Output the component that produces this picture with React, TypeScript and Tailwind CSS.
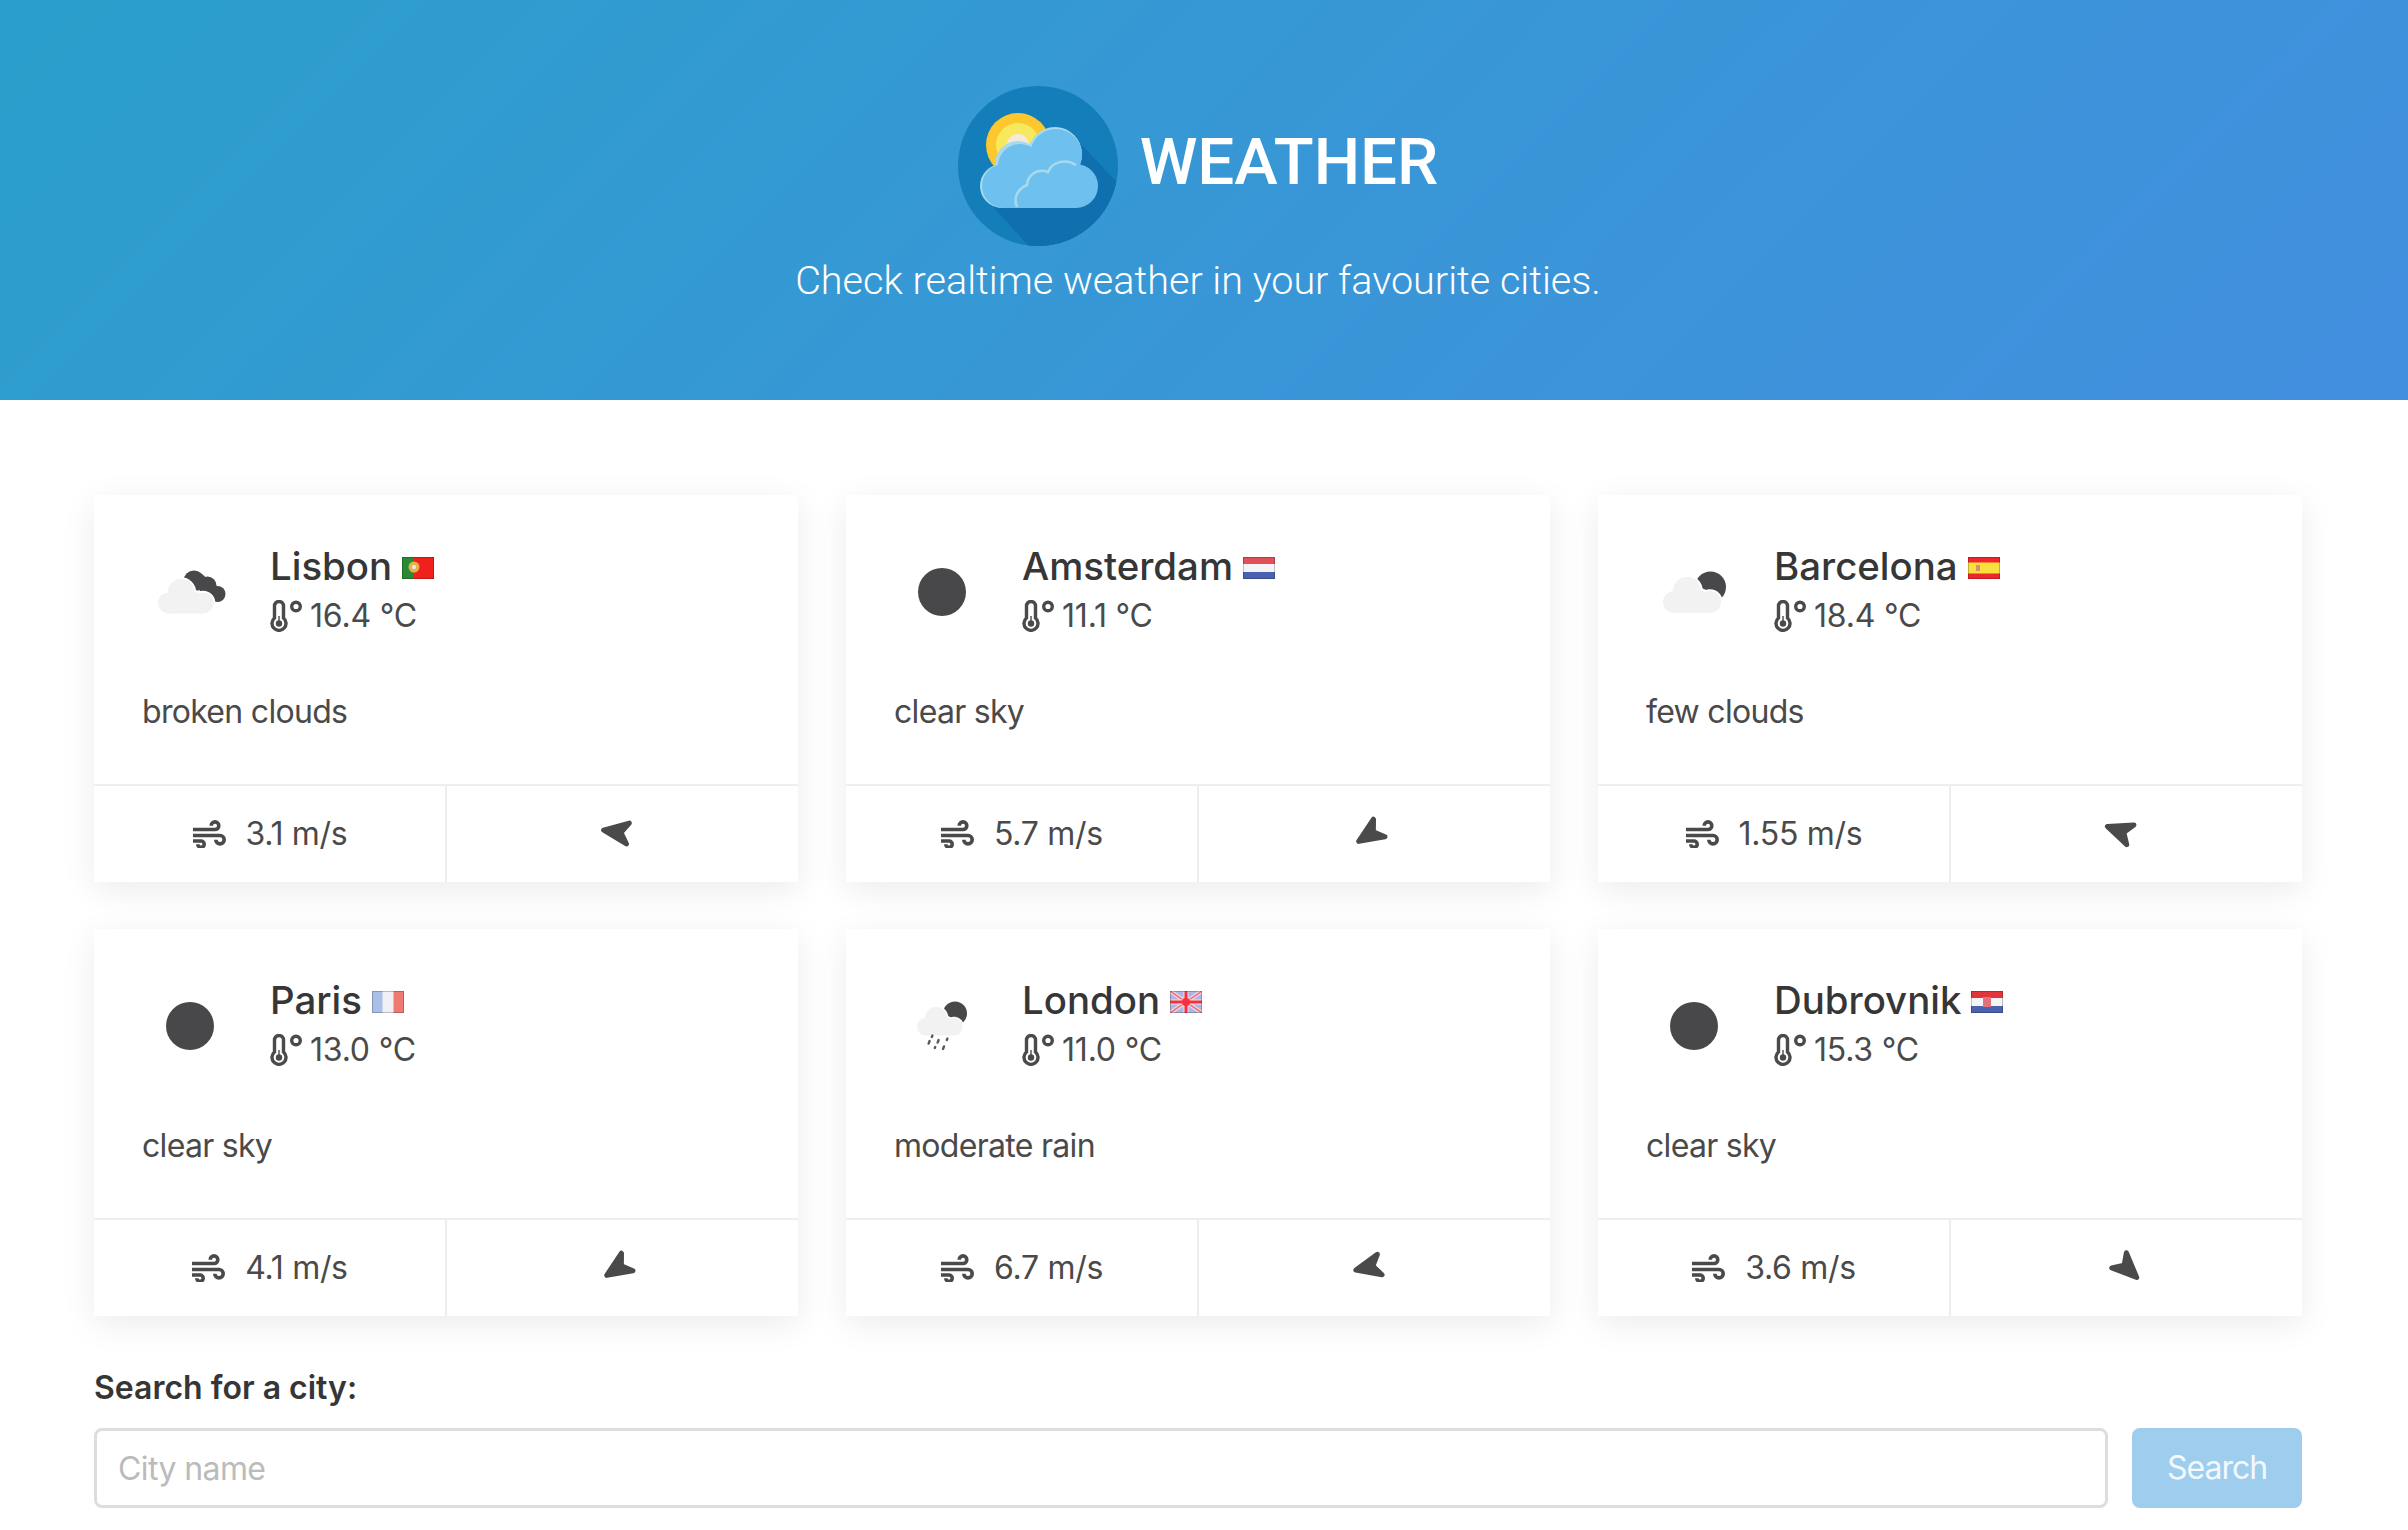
import React from "react";

type Weather = "broken" | "clear" | "few" | "rain";
type Flag = "pt" | "nl" | "es" | "fr" | "gb" | "hr";

const cities: { name: string; flag: Flag; temp: string; desc: string; weather: Weather; wind: string; deg: number; dx: number; dy: number }[] = [
  { name: "Lisbon", flag: "pt", temp: "16.4", desc: "broken clouds", weather: "broken", wind: "3.1", deg: -82, dx: -6, dy: -2 },
  { name: "Amsterdam", flag: "nl", temp: "11.1", desc: "clear sky", weather: "clear", wind: "5.7", deg: -123, dx: -5, dy: 0 },
  { name: "Barcelona", flag: "es", temp: "18.4", desc: "few clouds", weather: "few", wind: "1.55", deg: -70, dx: -7, dy: -3 },
  { name: "Paris", flag: "fr", temp: "13.0", desc: "clear sky", weather: "clear", wind: "4.1", deg: -123, dx: -5, dy: 0 },
  { name: "London", flag: "gb", temp: "11.0", desc: "moderate rain", weather: "rain", wind: "6.7", deg: -103, dx: -6, dy: -1 },
  { name: "Dubrovnik", flag: "hr", temp: "15.3", desc: "clear sky", weather: "clear", wind: "3.6", deg: 134, dx: 0, dy: 0 },
];

const Logo = () => (
  <svg width="160" height="160" viewBox="0 0 160 160" className="shrink-0">
    <defs>
      <clipPath id="logo-circle">
        <circle cx="80" cy="80" r="80" />
      </clipPath>
    </defs>
    <circle cx="80" cy="80" r="80" fill="#147ebb" />
    <polygon points="123,58 168,106 168,168 78,168 30,115" fill="#106fae" clipPath="url(#logo-circle)" />
    <circle cx="60" cy="59" r="32" fill="#fdc72e" />
    <circle cx="60" cy="59" r="22" fill="#f7e95e" />
    <circle cx="60" cy="59" r="11" fill="#f3e9dc" />
    <g fill="#a9d9ec">
      <circle cx="97" cy="68" r="27" />
      <circle cx="60" cy="78" r="23" />
      <circle cx="44" cy="100" r="22" />
    </g>
    <g fill="#6ec1ee">
      <circle cx="98" cy="69" r="26" />
      <circle cx="62" cy="80" r="22" />
      <circle cx="46" cy="100" r="22" />
      <circle cx="118" cy="100" r="22" />
      <rect x="46" y="78" width="72" height="44" />
    </g>
    <path d="M59 121 C55 111 60 103 69 99 C70 88 80 82 90 86 C94 76 108 72 118 79" fill="none" stroke="#a9d9ec" strokeWidth="2.5" />
  </svg>
);

const Cloud = ({ x, y, s = 1, fill }: { x: number; y: number; s?: number; fill: string }) => (
  <g transform={`translate(${x} ${y}) scale(${s})`} fill={fill} stroke={fill === "#fff" ? "#fff" : "none"} strokeWidth={fill === "#fff" ? 3.5 : 0}>
    <circle cx="11" cy="25" r="11" />
    <circle cx="24" cy="14" r="14" />
    <circle cx="37" cy="22" r="9" />
    <circle cx="47" cy="25" r="11" />
    <rect x="11" y="18" width="36" height="18" />
  </g>
);

const WeatherIcon = ({ type }: { type: Weather }) => (
  <svg width="96" height="96" viewBox="0 0 96 96" className="shrink-0">
    {type === "clear" && <circle cx="48" cy="48" r="24" fill="#48484a" />}
    {type === "few" && (
      <>
        <circle cx="64.5" cy="43" r="15.5" fill="#48484a" />
        <Cloud x={17} y={33} fill="#fff" />
        <Cloud x={17} y={33} fill="#f2f2f2" />
      </>
    )}
    {type === "broken" && (
      <>
        <g fill="#48484a">
          <circle cx="52" cy="37" r="10.5" />
          <circle cx="65.5" cy="41.5" r="9" />
          <circle cx="75.5" cy="50" r="8" />
          <path d="M45 36 L60 30 L83 50 L72 58 Z" />
        </g>
        <Cloud x={16} y={35} s={0.96} fill="#fff" />
        <Cloud x={16} y={35} s={0.96} fill="#f2f2f2" />
      </>
    )}
    {type === "rain" && (
      <>
        <circle cx="61" cy="35.5" r="12" fill="#48484a" />
        <Cloud x={23} y={29} s={0.79} fill="#fff" />
        <Cloud x={23} y={29} s={0.79} fill="#f2f2f2" />
        <g stroke="#58585a" strokeWidth="2.4" strokeLinecap="round">
          <path d="M38.4 57.6 L37.8 59" />
          <path d="M35.6 63 L34.6 65.6" />
          <path d="M44.6 62 L43.6 64.6" />
          <path d="M53.4 60.6 L52.8 62" />
          <path d="M41.2 69 L40.8 70" />
          <path d="M50 68.4 L49 71" />
        </g>
      </>
    )}
  </svg>
);

const FlagIcon = ({ code }: { code: Flag }) => (
  <svg width="32" height="22" viewBox="0 0 32 22" className="shrink-0 ml-[10px] mt-[4px] [filter:blur(0.5px)]">
    {code === "pt" && (
      <>
        <rect width="32" height="22" fill="#f0201c" />
        <rect width="12" height="22" fill="#2a8a34" />
        <circle cx="12" cy="10" r="5.5" fill="#e9b04a" />
        <circle cx="12" cy="10" r="2.2" fill="#e8e4e4" />
      </>
    )}
    {code === "nl" && (
      <>
        <rect width="32" height="22" fill="#f4f4f8" />
        <rect width="32" height="7" fill="#e0505a" />
        <rect y="15" width="32" height="7" fill="#4a62b0" />
      </>
    )}
    {code === "es" && (
      <>
        <rect width="32" height="22" fill="#f0262a" />
        <rect y="5.5" width="32" height="11" fill="#f7e13c" />
        <rect x="8" y="8" width="4" height="6" fill="#e08a78" />
      </>
    )}
    {code === "fr" && (
      <>
        <rect width="32" height="22" fill="#f0f0f4" />
        <rect width="10.5" height="22" fill="#a9bfe8" />
        <rect x="21.5" width="10.5" height="22" fill="#ef7a72" />
      </>
    )}
    {code === "gb" && (
      <>
        <rect width="32" height="22" fill="#aab6e6" />
        <path d="M0 0 L32 22 M32 0 L0 22" stroke="#f0d8e0" strokeWidth="4" />
        <path d="M0 0 L32 22 M32 0 L0 22" stroke="#f0707c" strokeWidth="1.5" />
        <path d="M16 0 V22 M0 11 H32" stroke="#f5dfe4" strokeWidth="5" />
        <path d="M16 0 V22 M0 11 H32" stroke="#f5303f" strokeWidth="3" />
        <circle cx="16" cy="11" r="4" fill="#f5303f" />
      </>
    )}
    {code === "hr" && (
      <>
        <rect width="32" height="22" fill="#f4f4f6" />
        <rect width="32" height="7" fill="#e0353a" />
        <rect y="15" width="32" height="7" fill="#4a62b0" />
        <rect x="12" y="6" width="8" height="10" fill="#e0707a" />
      </>
    )}
    <rect x="0.5" y="0.5" width="31" height="21" fill="none" stroke="#000" strokeOpacity="0.22" />
  </svg>
);

const Thermometer = () => (
  <svg width="32" height="32" viewBox="0 0 32 32" className="shrink-0">
    <path d="M4.5 18 V6 a4.5 4.5 0 0 1 9 0 V18 a7 7 0 1 1 -9 0 Z" fill="none" stroke="#4a4a4a" strokeWidth="3.4" />
    <circle cx="9" cy="23.5" r="3.2" fill="#4a4a4a" />
    <path d="M9 16 V24" stroke="#4a4a4a" strokeWidth="1.4" />
    <circle cx="26" cy="6.5" r="4.3" fill="none" stroke="#4a4a4a" strokeWidth="3.4" />
  </svg>
);

const WindIcon = () => (
  <svg width="34" height="28" viewBox="0 0 34 28" fill="none" stroke="#4a4a4a" strokeWidth="3.6" className="shrink-0">
    <path d="M1 9.5 H23 a3.8 3.8 0 1 0 -3.8 -3.8" />
    <path d="M1 15.5 H28 a4.2 4.2 0 1 1 -4.2 4.2" />
    <path d="M1 21 H9 a3.2 3.2 0 1 1 -3.2 3.2" />
  </svg>
);

const WindArrow = ({ deg, dx, dy }: { deg: number; dx: number; dy: number }) => (
  <svg width="48" height="48" viewBox="-24 -24 48 48" className="shrink-0">
    <path
      d="M0 -13.5 L10.5 11 L0 4 L-10.5 11 Z"
      fill="#4a4a4a"
      stroke="#4a4a4a"
      strokeWidth="5"
      strokeLinejoin="round"
      transform={`translate(${dx} ${dy}) rotate(${deg})`}
    />
  </svg>
);

const Card = ({ city }: { city: (typeof cities)[number] }) => (
  <div className="bg-white shadow-[0_8px_32px_rgba(0,0,0,0.08)] flex flex-col h-[387px]">
    <div className="flex-1 px-12 pt-[49px]">
      <div className="flex gap-8">
        <WeatherIcon type={city.weather} />
        <div>
          <div className="flex items-center text-[38.4px] leading-[44px] font-medium text-[#363636]">
            {city.name}
            <FlagIcon code={city.flag} />
          </div>
          <div className="flex items-center gap-2 mt-2 text-[32px] leading-[40px] tracking-[-0.2px] text-[#4a4a4a]">
            <Thermometer />
            {city.temp} °C
          </div>
        </div>
      </div>
      <p className="mt-12 text-[32px] leading-[48px] tracking-[-0.7px] text-[#4a4a4a]">{city.desc}</p>
    </div>
    <div className="flex shrink-0 h-[98px] border-t-2 border-[#eee] text-[32px] tracking-[-0.3px] text-[#4a4a4a]">
      <div className="flex-1 flex items-center justify-center gap-5">
        <WindIcon />
        {city.wind} m/s
      </div>
      <div className="flex-1 flex items-center justify-center border-l-2 border-[#eee]">
        <WindArrow deg={city.deg} dx={city.dx} dy={city.dy} />
      </div>
    </div>
  </div>
);

export default function App() {
  return (
    <div className="min-h-[1530px] bg-white font-['Inter',sans-serif] overflow-hidden">
      {/* Header */}
      <header className="h-[400px] pr-3 pt-[86px] bg-linear-135 from-[#2a9fcc] to-[#428fdf] text-white font-['Roboto',sans-serif] flex flex-col items-center">
        <div className="flex items-center gap-[22px]">
          <Logo />
          <h1 className="text-[65.5px] leading-none font-medium -mt-2">WEATHER</h1>
        </div>
        <p className="text-[39.6px] leading-[48px] font-[350] mt-[11px]">Check realtime weather in your favourite cities.</p>
      </header>

      <main className="pl-[94px] pr-[106px] pt-[95px]">
        {/* Cities */}
        <div className="grid grid-cols-3 gap-x-12 gap-y-[47px]">
          {cities.map((city) => (
            <Card key={city.name} city={city} />
          ))}
        </div>

        {/* Search */}
        <label className="block mt-[52px] text-[32px] leading-[40px] font-semibold text-[#363636]">Search for a city:</label>
        <div className="flex gap-6 mt-[20px]">
          <input
            placeholder="City name"
            className="flex-1 h-20 px-[21px] text-[32px] tracking-[-0.6px] border-[3px] border-[#ddd] rounded-lg outline-none placeholder:text-[#bbb]"
          />
          <button className="w-[170px] h-20 rounded-lg bg-[#9fcdee] text-[#f2f9fd] text-[32px] tracking-[-1px]">Search</button>
        </div>
      </main>
    </div>
  );
}
